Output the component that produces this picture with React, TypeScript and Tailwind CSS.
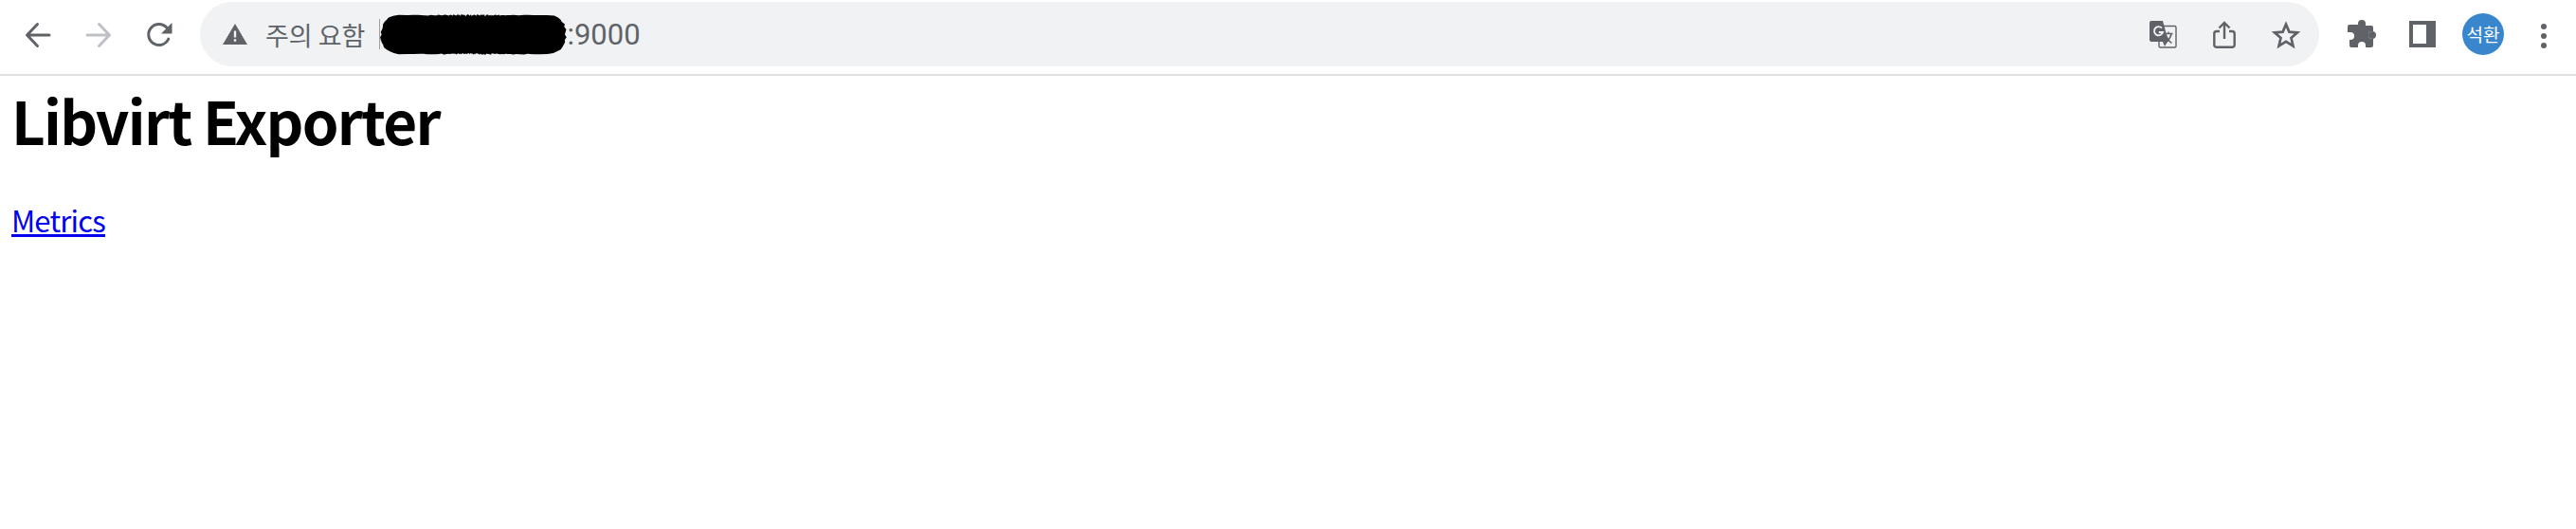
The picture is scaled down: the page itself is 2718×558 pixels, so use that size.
import React from "react";

const ink = "#5f6368";

function Back({ color = ink, flip = false }: { color?: string; flip?: boolean }) {
  return (
    <svg width="28" height="28" viewBox="0 0 28 28" fill="none" className={flip ? "shrink-0 -scale-x-100" : "shrink-0"}>
      <path d="M26 14H3M13.500 2.500 2.500 14l11 11.500" stroke={color} strokeWidth="3" strokeLinecap="round" strokeLinejoin="round" />
    </svg>
  );
}

function Reload() {
  return (
    <svg width="28" height="28" viewBox="0 0 28 28" fill="none" className="shrink-0">
      <path d="M23.800 18a11 11 0 1 1-1.600-11.500" stroke={ink} strokeWidth="3" strokeLinecap="round" />
      <path d="M27.500 1v11.500H16z" fill={ink} />
    </svg>
  );
}

function Warning() {
  return (
    <svg width="26" height="22" viewBox="0 0 26 22" className="shrink-0">
      <path d="M13 0 26 22H0z" fill={ink} />
      <path d="M11.800 7.500h2.400v7h-2.400zM11.800 16.200h2.400v2.500h-2.400z" fill="#f1f2f4" />
    </svg>
  );
}

function Translate() {
  return (
    <svg width="29" height="29" viewBox="0 0 29 29" fill="none" className="shrink-0">
      <rect x="10" y="5.500" width="18" height="22.500" rx="1.500" fill="#f1f2f4" stroke={ink} strokeWidth="1.400" />
      <path d="M2 0h12l6 22H2a2 2 0 0 1-2-2V2a2 2 0 0 1 2-2z" fill={ink} />
      <path d="M13 7.600A4.600 4.600 0 1 0 14 12H9.800" stroke="#f1f2f4" strokeWidth="1.900" />
      <path d="M15.500 13.500h9M20 11.500v2M23 14c-1 4-4 8-7.500 9.500M17.500 15.500c1 3 3 6 6 8" stroke={ink} strokeWidth="1.500" />
      <path d="M14 22l2 5 3-5z" fill={ink} />
    </svg>
  );
}

function Share() {
  return (
    <svg width="24" height="29" viewBox="0 0 24 29" fill="none" className="shrink-0">
      <path d="M7 11H3.500A2.500 2.500 0 0 0 1.300 13.500v11.700A2.500 2.500 0 0 0 3.500 27.700h17a2.500 2.500 0 0 0 2.200-2.500V13.500A2.500 2.500 0 0 0 20.500 11H17" stroke={ink} strokeWidth="2.400" />
      <path d="M12 19V2.500M6.500 7.500 12 2l5.500 5.500" stroke={ink} strokeWidth="2.400" />
    </svg>
  );
}

function Star() {
  return (
    <svg width="30" height="29" viewBox="0 0 30 29" fill="none" className="shrink-0">
      <path d="m15 3.600 3.400 8 8.700.7-6.600 5.700 2 8.500L15 21.900l-7.500 4.600 2-8.500-6.600-5.700 8.700-.7z" stroke={ink} strokeWidth="2.700" />
    </svg>
  );
}

function Puzzle() {
  return (
    <svg width="30" height="29" viewBox="0 0 30 29" className="shrink-0">
      <path
        d="M11 4a4 4 0 0 1 8 0v2h6a2 2 0 0 1 2 2v4h-1a4 4 0 0 0 0 8h1v7a2 2 0 0 1-2 2h-6v-2a4 4 0 0 0-8 0v2H4a2 2 0 0 1-2-2v-6h1a4 4 0 0 0 0-8H0v-6a2 2 0 0 1 2-2h9z"
        fill={ink}
      />
      <circle cx="26" cy="16" r="4" fill={ink} />
    </svg>
  );
}

function Panel() {
  return (
    <svg width="28" height="28" viewBox="0 0 28 28" className="shrink-0">
      <path d="M0 0h28v28H0zM4 4v20h14V4z" fill={ink} fillRule="evenodd" />
    </svg>
  );
}

function Dots() {
  return (
    <svg width="6" height="26" viewBox="0 0 6 26" className="shrink-0">
      <circle cx="3" cy="3" r="3" fill={ink} />
      <circle cx="3" cy="13" r="3" fill={ink} />
      <circle cx="3" cy="23" r="3" fill={ink} />
    </svg>
  );
}

// The hand-scribbled redaction: a pill whose outline is roughened with jitter.
function Redaction() {
  const w = 197;
  const h = 43;
  const r = 18;
  const inset = 1;
  const pts: string[] = [];
  const hw = w / 2 - inset;
  const hh = h / 2 - inset;
  const n = 220;
  for (let i = 0; i < n; i++) {
    const t = (i / n) * 2 * Math.PI;
    const c = Math.cos(t);
    const s = Math.sin(t);
    // Ray from the centre to the rounded rectangle.
    let lo = 0;
    let hi = w;
    for (let k = 0; k < 24; k++) {
      const m = (lo + hi) / 2;
      const qx = Math.abs(c * m) - (hw - r);
      const qy = Math.abs(s * m) - (hh - r);
      const d = Math.hypot(Math.max(qx, 0), Math.max(qy, 0)) + Math.min(Math.max(qx, qy), 0) - r;
      if (d > 0) hi = m;
      else lo = m;
    }
    const raw = Math.sin(i * 12.9898) * 43758.5453;
    const jitter = (raw - Math.floor(raw)) * 2 - 1;
    const m = lo + jitter;
    pts.push(`${(w / 2 + c * m).toFixed(1)},${(h / 2 + s * m).toFixed(1)}`);
  }
  return (
    <svg width={w} height={h} viewBox={`0 0 ${w} ${h}`} className="shrink-0">
      <polygon points={pts.join(" ")} fill="#000" />
    </svg>
  );
}

export default function App() {
  return (
    <div className="h-[558px] w-[2718px] overflow-hidden bg-white font-['Noto_Sans_CJK_KR',sans-serif]">
      <div className="flex h-[80px] items-start border-b-2 border-[#dedfe0] pt-[2px]">
        <div className="ml-[26px] mt-[21px]"><Back /></div>
        <div className="ml-[36px] mt-[21px]"><Back color="#bdc1c6" flip /></div>
        <div className="ml-[36px] mt-[21px]"><Reload /></div>
        <div className="ml-[29px] flex h-[68px] w-[2236px] items-center rounded-[34px] bg-[#f1f2f4]">
          <div className="ml-[24px] -mt-[1px]"><Warning /></div>
          <span className="ml-[19px] text-[27px] leading-none text-[#5f6368]">주의 요함</span>
          <div className="ml-[15px] h-[32px] w-[1px] bg-[#9aa0a6]" />
          <Redaction />
          <span className="font-['Roboto',sans-serif] text-[31px] leading-none text-[#5f6368]">:9000</span>
          <div className="ml-auto flex items-center">
            <Translate />
            <div className="ml-[38px]"><Share /></div>
            <div className="ml-[38px] mr-[20px]"><Star /></div>
          </div>
        </div>
        <div className="ml-[30px] mt-[19px]"><Puzzle /></div>
        <div className="ml-[35px] mt-[20px]"><Panel /></div>
        <div className="ml-[28px] mt-[12px] flex h-[44px] w-[44px] items-center justify-center rounded-full bg-[#3a86cd] text-[19px] text-white">석환</div>
        <div className="ml-[39px] mt-[23px]"><Dots /></div>
      </div>
      <div className="pl-[12px]">
        <h1 className="mt-[6px] text-[62px] font-bold leading-[80px] tracking-[-1.750px] text-black">Libvirt Exporter</h1>
        <a href="#" className="mt-[44px] block w-fit text-[31px] leading-[44px] tracking-[-0.800px] text-[#0000ee] underline">Metrics</a>
      </div>
    </div>
  );
}
